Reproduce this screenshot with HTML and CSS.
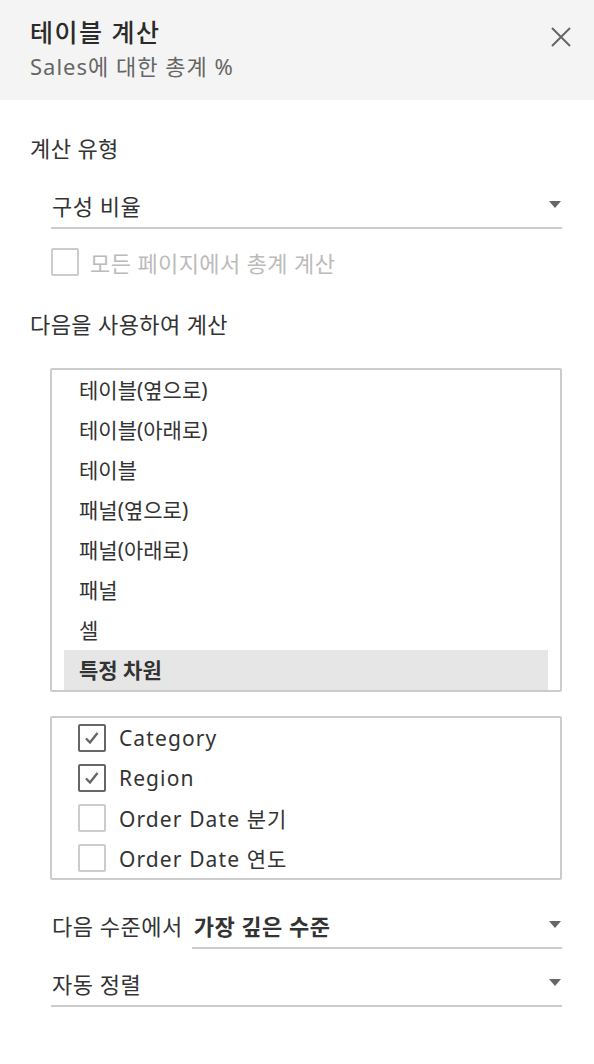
FILE: index.html
```html
<!DOCTYPE html>
<html lang="ko">
<head>
<meta charset="utf-8">
<link rel="stylesheet" href="styles.css">
</head>
<body>
<div class="panel">
  <header class="header">
    <div class="titles">
      <div class="title">테이블 계산</div>
      <div class="subtitle">Sales에 대한 총계 %</div>
    </div>
    <svg class="close" width="20" height="20" viewBox="0 0 20 20"><path d="M1 1 L19 19 M19 1 L1 19" stroke="#666" stroke-width="2" fill="none"/></svg>
  </header>
  <main class="body">
    <div class="label first">계산 유형</div>
    <div class="dropdown">
      <span class="value">구성 비율</span>
      <span class="caret"></span>
    </div>
    <div class="check-row disabled">
      <span class="box"></span>
      <span>모든 페이지에서 총계 계산</span>
    </div>
    <div class="label second">다음을 사용하여 계산</div>
    <div class="listbox">
      <div class="item">테이블(옆으로)</div>
      <div class="item">테이블(아래로)</div>
      <div class="item">테이블</div>
      <div class="item">패널(옆으로)</div>
      <div class="item">패널(아래로)</div>
      <div class="item">패널</div>
      <div class="item">셀</div>
      <div class="item selected">특정 차원</div>
    </div>
    <div class="listbox checks">
      <div class="citem"><span class="box on"><svg width="16" height="14" viewBox="0 0 16 14"><path d="M2 7.5 L6 11.5 L13.5 2" stroke="#666" stroke-width="2.4" fill="none"/></svg></span><span>Category</span></div>
      <div class="citem"><span class="box on"><svg width="16" height="14" viewBox="0 0 16 14"><path d="M2 7.5 L6 11.5 L13.5 2" stroke="#666" stroke-width="2.4" fill="none"/></svg></span><span>Region</span></div>
      <div class="citem"><span class="box"></span><span>Order Date 분기</span></div>
      <div class="citem"><span class="box"></span><span>Order Date 연도</span></div>
    </div>
    <div class="level-row">
      <span class="level-label">다음 수준에서</span>
      <div class="dropdown inline">
        <span class="value bold">가장 깊은 수준</span>
        <span class="caret"></span>
      </div>
    </div>
    <div class="dropdown sort">
      <span class="value">자동 정렬</span>
      <span class="caret"></span>
    </div>
  </main>
</div>
</body>
</html>
```

FILE: styles.css
```css
* { box-sizing: border-box; }
html, body { margin: 0; padding: 0; background: #fff; }
body {
  width: 594px;
  height: 1064px;
  font-family: "Noto Sans", "Noto Sans CJK KR", sans-serif;
  color: #333;
  font-size: 22px;
}
.header {
  height: 100px;
  background: #f4f4f4;
  padding: 18px 23px 0 30px;
  display: flex;
  justify-content: space-between;
  align-items: flex-start;
}
.title {
  font-size: 25px;
  line-height: 28px;
  font-weight: 500;
  color: #2b2b2b;
  letter-spacing: 1.5px;
}
.subtitle {
  margin-top: 6px;
  font-size: 22px;
  line-height: 28px;
  color: #666;
  letter-spacing: 1px;
}
.close { margin-top: 9px; display: block; }
.body { padding: 0 32px 0 30px; }
.label { font-size: 22px; line-height: 28px; color: #333; letter-spacing: 0.4px; }
.label.first { margin-top: 34px; }
.label.second { margin-top: 34px; }
.dropdown {
  display: flex;
  align-items: center;
  justify-content: space-between;
  height: 47px;
  border-bottom: 2px solid #ccc;
  margin-left: 21px;
  padding: 0 1px;
  margin-top: 20px;
}
.value { font-size: 22px; color: #333; letter-spacing: 0.5px; }
.value.bold { font-weight: 700; }
.caret {
  width: 0; height: 0;
  border-left: 6px solid transparent;
  border-right: 6px solid transparent;
  border-top: 7px solid #666;
}
.check-row {
  display: flex;
  align-items: center;
  gap: 11px;
  margin: 19px 0 0 21px;
  height: 28px;
  font-size: 22px;
  letter-spacing: 0.4px;
}
.check-row.disabled { color: #bbb; }
.box {
  width: 28px; height: 28px;
  border: 2px solid #ccc;
  border-radius: 2px;
  display: inline-flex;
  align-items: center;
  justify-content: center;
  flex: none;
}
.box.on { border-color: #666; }
.listbox {
  margin: 30px 0 0 20px;
  border: 2px solid #ccc;
  border-radius: 2px;
  padding: 0 12px;
}
.item {
  height: 40px;
  line-height: 40px;
  padding-left: 15px;
  color: #333;
  font-size: 21px;
}
.item.selected { background: #e6e6e6; font-weight: 700; }
.listbox.checks { margin-top: 24px; padding: 0 0 0 26px; }
.citem {
  height: 40px;
  display: flex;
  align-items: center;
  gap: 13px;
  font-size: 21px;
  letter-spacing: 1.1px;
}
.level-row {
  display: flex;
  align-items: stretch;
  margin: 22px 0 0 22px;
}
.level-label {
  display: flex;
  align-items: center;
  height: 47px;
  padding-bottom: 2px;
  margin-right: 9px;
  letter-spacing: 0.5px;
}
.dropdown.inline { flex: 1; margin: 0; }
.dropdown.inline .value { margin-left: 1px; }
.dropdown.sort { margin-top: 11px; }
```
